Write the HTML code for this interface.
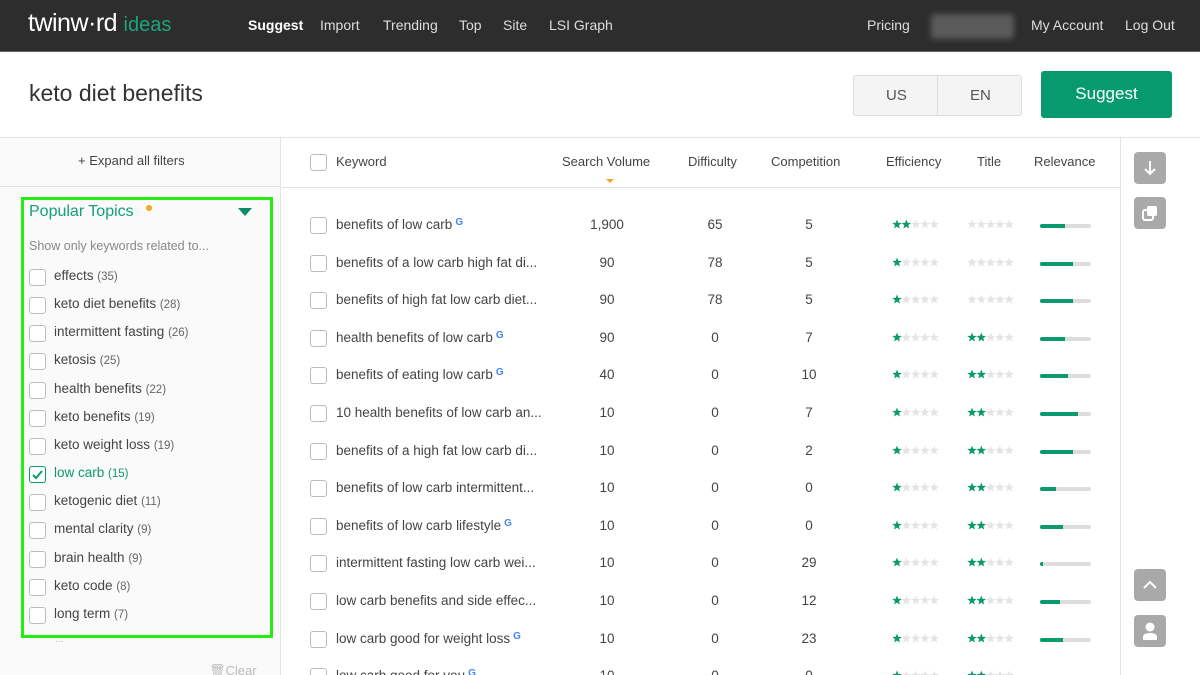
<!DOCTYPE html>
<html><head><meta charset="utf-8"><style>
*{box-sizing:border-box;margin:0;padding:0}
html,body{width:1200px;height:675px;overflow:hidden}
body{background:#fff;font-family:"Liberation Sans",sans-serif;color:#333;position:relative}
.a{position:absolute}
.nav{left:0;top:0;width:1200px;height:52px;background:#2d2d2d;border-bottom:1px solid #666}
.nav span{position:absolute;top:17px;font-size:14px;color:#ddd}
.cb{position:absolute;width:17px;height:17px;border:1px solid #b8bcc4;border-radius:3px;background:#fff}
.kw{position:absolute;left:336px;font-size:13.5px;color:#444;white-space:nowrap}
.num{position:absolute;font-size:13.5px;color:#444;width:80px;text-align:center}
.stars{position:absolute}
.bar{position:absolute;left:1040px;width:51px;height:4px;background:#ddd;border-radius:2px;overflow:hidden}
.bar i{display:block;height:4px;background:#0a9a6e}
.g{font-size:10px;font-weight:bold;color:#4285f4;vertical-align:top;margin-left:3px}
.th{position:absolute;top:154px;font-size:13px;color:#444}
.tp{position:absolute;left:54px;font-size:13.5px;color:#444;white-space:nowrap}
.tp small{font-size:11.5px;color:#666}
.sb{position:absolute;left:1134px;width:32px;height:32px;background:#a9a9a9;border-radius:4px}
</style></head><body>
<div class="a nav">
<span style="left:28px;top:9px;font-size:25px;color:#fff;letter-spacing:-0.5px">twinw·rd <span style="position:static;color:#1aa57b;font-size:20px;letter-spacing:0">ideas</span></span>
<span style="left:248px;color:#fff;font-weight:bold">Suggest</span>
<span style="left:320px">Import</span>
<span style="left:383px">Trending</span>
<span style="left:459px">Top</span>
<span style="left:503px">Site</span>
<span style="left:549px">LSI Graph</span>
<span style="left:867px">Pricing</span>
<span style="left:931px;top:14px;width:83px;height:25px;background:#5a5a5a;border-radius:4px;filter:blur(3px)"></span>
<span style="left:1031px">My Account</span>
<span style="left:1125px">Log Out</span>
</div>
<div class="a" style="left:29px;top:80px;font-size:23px;color:#333">keto diet benefits</div>
<div class="a" style="left:853px;top:75px;width:169px;height:41px;border:1px solid #ddd;border-radius:3px;background:#f4f4f4"></div>
<div class="a" style="left:937px;top:75px;width:1px;height:41px;background:#ddd"></div>
<div class="a" style="left:886px;top:87px;font-size:15px;color:#555">US</div>
<div class="a" style="left:970px;top:87px;font-size:15px;color:#555">EN</div>
<div class="a" style="left:1041px;top:71px;width:131px;height:47px;background:#069a6e;border-radius:3px;color:#fff;font-size:17px;text-align:center;line-height:46px">Suggest</div>
<div class="a" style="left:0;top:137px;width:1200px;height:1px;background:#e3e3e3"></div>
<div class="a" style="left:0;top:138px;width:281px;height:537px;background:#fafafa;border-right:1px solid #e3e3e3"></div>
<div class="a" style="left:78px;top:153px;font-size:13px;color:#444">+ Expand all filters</div>
<div class="a" style="left:0;top:186px;width:281px;height:1px;background:#e3e3e3"></div>
<div class="a" style="left:21px;top:197px;width:252px;height:441px;border:3px solid #22ee11"></div>
<div class="a" style="left:29px;top:203px;font-size:16px;color:#12a07a">Popular Topics</div>
<div class="a" style="left:146px;top:205px;width:6px;height:6px;border-radius:3px;background:#f5a623"></div>
<div class="a" style="left:238px;top:208px;width:0;height:0;border-left:7px solid transparent;border-right:7px solid transparent;border-top:8px solid #0a8a66"></div>
<div class="a" style="left:29px;top:239px;font-size:12.5px;color:#888">Show only keywords related to...</div>
<div id="tps"></div>
<div class="a" style="left:55px;top:634px;font-size:10px;color:#bbb">...</div>
<div class="a" style="left:209px;top:663px;font-size:13px;color:#bbb">🗑Clear</div>
<div class="cb" style="left:310px;top:154px"></div>
<div class="th" style="left:336px">Keyword</div>
<div class="th" style="left:562px">Search Volume</div>
<div class="a" style="left:606px;top:179px;border-left:4px solid transparent;border-right:4px solid transparent;border-top:4px solid #f5a623"></div>
<div class="th" style="left:688px">Difficulty</div>
<div class="th" style="left:771px">Competition</div>
<div class="th" style="left:886px">Efficiency</div>
<div class="th" style="left:977px">Title</div>
<div class="th" style="left:1034px">Relevance</div>
<div class="a" style="left:282px;top:187px;width:838px;height:1px;background:#e3e3e3"></div>
<div class="a" style="left:1120px;top:138px;width:1px;height:537px;background:#e3e3e3"></div>
<div class="sb" style="top:152px"><svg width="32" height="32"><path d="M16 9v13M11 17l5 5 5-5" stroke="#fff" stroke-width="2" fill="none"/></svg></div>
<div class="sb" style="top:197px"><svg width="32" height="32"><rect x="13" y="9" width="10" height="10" rx="2" fill="#fff"/><rect x="9" y="13" width="10" height="10" rx="2" fill="none" stroke="#fff" stroke-width="2"/></svg></div>
<div class="sb" style="top:569px"><svg width="32" height="32"><path d="M10 19l6-6 6 6" stroke="#fff" stroke-width="2" fill="none"/></svg></div>
<div class="sb" style="top:615px"><svg width="32" height="32"><circle cx="16" cy="12" r="4.5" fill="#fff"/><path d="M9 25v-3q0-4 7-4t7 4v3z" fill="#fff"/></svg></div>
<div id="rows"></div>
<script>
var t=[["effects",35],["keto diet benefits",28],["intermittent fasting",26],["ketosis",25],["health benefits",22],["keto benefits",19],["keto weight loss",19],["low carb",15],["ketogenic diet",11],["mental clarity",9],["brain health",9],["keto code",8],["long term",7]];
var h="";t.forEach(function(x,i){var y=277+i*28.15;var c=i==7;
h+='<div class="cb" style="left:29px;top:'+(y-8)+'px;'+(c?'border-color:#0a9a6e':'')+'">'+(c?'<svg width="15" height="15" style="position:absolute;left:0;top:0"><path d="M3 8l3 3 6-7" stroke="#0a9a6e" stroke-width="2" fill="none"/></svg>':'')+'</div>';
h+='<div class="tp" style="top:'+(y-9)+'px;'+(c?'color:#0a9a6e':'')+'">'+x[0]+' <small style="'+(c?'color:#0a9a6e':'')+'">('+x[1]+')</small></div>';});
document.getElementById("tps").innerHTML=h;
var r=[["benefits of low carb",1,"1,900",65,5,2,0,25],["benefits of a low carb high fat di...",0,90,78,5,1,0,33],["benefits of high fat low carb diet...",0,90,78,5,1,0,33],["health benefits of low carb",1,90,0,7,1,2,25],["benefits of eating low carb",1,40,0,10,1,2,28],["10 health benefits of low carb an...",0,10,0,7,1,2,38],["benefits of a high fat low carb di...",0,10,0,2,1,2,33],["benefits of low carb intermittent...",0,10,0,0,1,2,16],["benefits of low carb lifestyle",1,10,0,0,1,2,23],["intermittent fasting low carb wei...",0,10,0,29,1,2,3],["low carb benefits and side effec...",0,10,0,12,1,2,20],["low carb good for weight loss",1,10,0,23,1,2,23],["low carb good for you",1,10,0,0,1,2,20]];
function star(cx,c){var p="",k;for(k=0;k<10;k++){var a=-Math.PI/2+k*Math.PI/5,rr=k%2?2.1:5;p+=(k?"L":"M")+(cx+rr*Math.cos(a)).toFixed(2)+" "+(5.5+rr*Math.sin(a)).toFixed(2)}return '<path d="'+p+'Z" fill="'+c+'"/>'}
function st(n){var s='<svg width="48" height="11">';for(var k=0;k<5;k++)s+=star(5+k*9.3,k<n?"#0a9a6e":"#e4e4e4");return s+"</svg>"}
h="";r.forEach(function(x,i){var y=225+i*37.6;
h+='<div class="cb" style="left:310px;top:'+(y-8)+'px"></div>';
h+='<div class="kw" style="top:'+(y-8)+'px">'+x[0]+(x[1]?'<span class="g">G</span>':'')+'</div>';
h+='<div class="num" style="left:567px;top:'+(y-8)+'px">'+x[2]+'</div>';
h+='<div class="num" style="left:675px;top:'+(y-8)+'px">'+x[3]+'</div>';
h+='<div class="num" style="left:769px;top:'+(y-8)+'px">'+x[4]+'</div>';
h+='<div class="stars" style="left:892px;top:'+(y-8)+'px">'+st(x[5])+'</div>';
h+='<div class="stars" style="left:967px;top:'+(y-8)+'px">'+st(x[6])+'</div>';
h+='<div class="bar" style="top:'+(y-1)+'px"><i style="width:'+x[7]+'px"></i></div>';});
document.getElementById("rows").innerHTML=h;
</script>
</body></html>
